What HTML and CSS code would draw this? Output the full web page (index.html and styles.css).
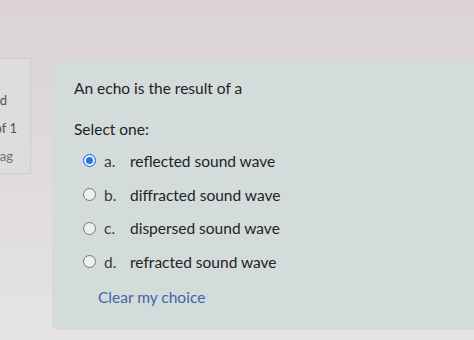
FILE: index.html
```html
<!DOCTYPE html>
<html lang="en">
<head>
    <meta charset="UTF-8">
    <meta name="viewport" content="width=device-width, initial-scale=1.0">
    <title>Quiz question</title>
    <link rel="stylesheet" href="styles.css">
</head>
<body>
    <div class="page">
        <div class="info">
            <p class="state">Not yet answered</p>
            <p class="grade">Marked out of 1</p>
            <p class="flag">Flag</p>
        </div>

        <div class="card">
            <p class="qtext">An echo is the result of a</p>
            <p class="prompt">Select one:</p>

            <div class="answers">
                <label class="answer">
                    <input type="radio" name="q1" checked>
                    <span class="mark"></span>
                    <span class="letter">a.</span>
                    <span class="text">reflected sound wave</span>
                </label>
                <label class="answer">
                    <input type="radio" name="q1">
                    <span class="mark"></span>
                    <span class="letter">b.</span>
                    <span class="text">diffracted sound wave</span>
                </label>
                <label class="answer">
                    <input type="radio" name="q1">
                    <span class="mark"></span>
                    <span class="letter">c.</span>
                    <span class="text">dispersed sound wave</span>
                </label>
                <label class="answer">
                    <input type="radio" name="q1">
                    <span class="mark"></span>
                    <span class="letter">d.</span>
                    <span class="text">refracted sound wave</span>
                </label>
            </div>

            <a class="clear" href="#">Clear my choice</a>
        </div>
    </div>
</body>
</html>
```

FILE: styles.css
```css
body {
    margin: 0;
    font-family: Lato, "Open Sans", sans-serif;
    color: #232323;
    background: linear-gradient(180deg, #dbd3d6 0%, #dfd9db 40%, #e5e4e3 100%);
    height: 340px;
    overflow: hidden;
}
.page {
    display: flex;
    align-items: flex-start;
    padding-top: 58px;
}
.info {
    width: 30px;
    height: 114px;
    overflow: hidden;
    background-color: #dedcdc;
    border: 1px solid #cfcdcd;
    border-left: none;
    font-size: 13px;
    color: #555;
}
.info p {
    margin: 0;
    white-space: nowrap;
    direction: rtl;
}
.info .state {
    margin-top: 33px;
    padding-right: 23px;
}
.info .grade {
    margin-top: 12px;
    padding-right: 13px;
}
.info .flag {
    margin-top: 12px;
    padding-right: 17px;
    color: #6d747a;
}
.card {
    flex: 1;
    margin-left: 21px;
    margin-top: 3px;
    height: 269px;
    padding: 18px 0 0 22px;
    box-sizing: border-box;
    background-color: #d4dbdb;
    border-radius: 6px 0 0 6px;
}
.qtext {
    margin: 0;
    font-size: 15.5px;
}
.prompt {
    margin: 23px 0 0 0;
    font-size: 15.5px;
}
.answers {
    margin-top: 6px;
    padding-left: 9px;
}
.answer {
    display: flex;
    align-items: center;
    height: 33.7px;
    font-size: 15.5px;
}
.answer input {
    display: none;
}
.mark {
    width: 11px;
    height: 11px;
    border: 1px solid #777;
    border-radius: 50%;
    background-color: #eeeeee;
}
input:checked + .mark {
    border-color: #2a73df;
    background-color: #2a73df;
    box-shadow: inset 0 0 0 2px #f4f7fb;
}
.letter {
    width: 26px;
    margin-left: 8px;
    color: #3b3b3b;
}
.clear {
    display: inline-block;
    margin: 9px 0 0 24px;
    font-size: 15.5px;
    color: #3d66a6;
    text-decoration: none;
}
```
